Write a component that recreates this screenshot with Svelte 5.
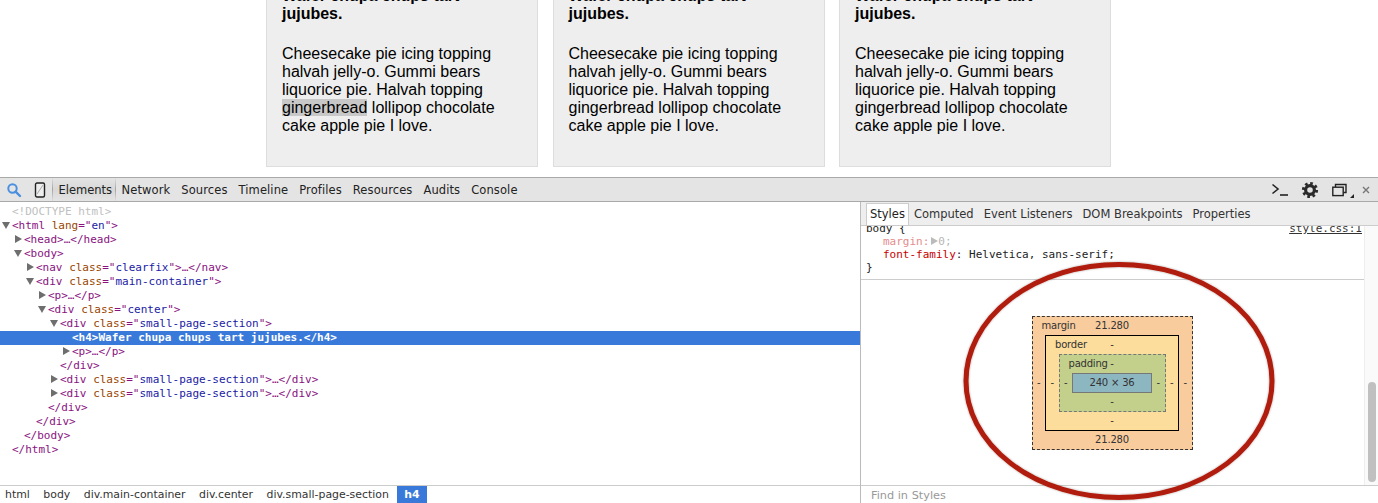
<script>
  const cards = [{ mark: true }, { mark: false }, { mark: false }]
  const tabs = ['Network', 'Sources', 'Timeline', 'Profiles', 'Resources', 'Audits', 'Console']
  const sideTabs = ['Computed', 'Event Listeners', 'DOM Breakpoints', 'Properties']
  const crumbs = ['html', 'body', 'div.main-container', 'div.center', 'div.small-page-section']

  const section = [['t', '<div '], ['a', 'class'], ['t', '="'], ['v', 'small-page-section'], ['t', '">']]
  const rows = [
    { depth: 0, parts: [['d', '<!DOCTYPE html>']] },
    { depth: 0, arrow: 'open', parts: [['t', '<html '], ['a', 'lang'], ['t', '="'], ['v', 'en'], ['t', '">']] },
    { depth: 1, arrow: 'closed', parts: [['t', '<head>…</head>']] },
    { depth: 1, arrow: 'open', parts: [['t', '<body>']] },
    { depth: 2, arrow: 'closed', parts: [['t', '<nav '], ['a', 'class'], ['t', '="'], ['v', 'clearfix'], ['t', '">…</nav>']] },
    { depth: 2, arrow: 'open', parts: [['t', '<div '], ['a', 'class'], ['t', '="'], ['v', 'main-container'], ['t', '">']] },
    { depth: 3, arrow: 'closed', parts: [['t', '<p>…</p>']] },
    { depth: 3, arrow: 'open', parts: [['t', '<div '], ['a', 'class'], ['t', '="'], ['v', 'center'], ['t', '">']] },
    { depth: 4, arrow: 'open', parts: section },
    { depth: 5, selected: true, parts: [['s', '<h4>Wafer chupa chups tart jujubes.</h4>']] },
    { depth: 5, arrow: 'closed', parts: [['t', '<p>…</p>']] },
    { depth: 4, parts: [['t', '</div>']] },
    { depth: 4, arrow: 'closed', parts: [...section, ['t', '…</div>']] },
    { depth: 4, arrow: 'closed', parts: [...section, ['t', '…</div>']] },
    { depth: 3, parts: [['t', '</div>']] },
    { depth: 2, parts: [['t', '</div>']] },
    { depth: 1, parts: [['t', '</body>']] },
    { depth: 0, parts: [['t', '</html>']] }
  ]
</script>

<div class="page">
  <div class="cards">
    {#each cards as card}
      <div class="card">
        <h4>Wafer chupa chups tart jujubes.</h4>
        <p>
          Cheesecake pie icing topping halvah jelly-o. Gummi bears liquorice pie. Halvah topping
          {#if card.mark}<span class="hl">gingerbread</span>{:else}gingerbread{/if}
          lollipop chocolate cake apple pie I love.
        </p>
      </div>
    {/each}
  </div>
</div>

<div class="devtools">
  <div class="toolbar">
    <svg class="tool search" width="16" height="16" viewBox="0 0 16 16">
      <circle cx="6.5" cy="6.5" r="4.2" fill="none" stroke="#4a8fe0" stroke-width="2" />
      <path d="M9.6 9.6 L14 14" stroke="#4a8fe0" stroke-width="2.4" stroke-linecap="round" />
    </svg>
    <svg class="tool device" width="12" height="16" viewBox="0 0 12 16">
      <rect x="1.5" y="1" width="9" height="14" rx="1.5" fill="#eee" stroke="#222" stroke-width="1.4" />
      <path d="M3 12 L9 3" stroke="#aaa" stroke-width="1" />
    </svg>
    <span class="tab active">Elements</span>
    {#each tabs as tab}
      <span class="tab">{tab}</span>
    {/each}
    <span class="spacer"></span>
    <svg class="tool" width="18" height="14" viewBox="0 0 18 14">
      <path d="M1.5 1.5 L7 6 L1.5 10.5" fill="none" stroke="#222" stroke-width="1.6" />
      <path d="M9 12 H17" stroke="#222" stroke-width="1.6" />
    </svg>
    <svg class="tool gear" width="18" height="18" viewBox="0 0 18 18">
      <circle cx="9" cy="9" r="6.6" fill="none" stroke="#2a2a2a" stroke-width="3" stroke-dasharray="2.6 2.58" />
      <circle cx="9" cy="9" r="4.4" fill="none" stroke="#2a2a2a" stroke-width="3.2" />
    </svg>
    <svg class="tool dock" width="22" height="17" viewBox="0 0 22 17">
      <path d="M3.5 6 V3.5 H14 V11.5 H11.5" fill="none" stroke="#222" stroke-width="1.4" />
      <rect x="0.8" y="6.2" width="10.4" height="8.4" fill="none" stroke="#222" stroke-width="1.4" />
      <path d="M22 13 V17 H18 Z" fill="#222" />
    </svg>
    <svg class="tool" width="8" height="8" viewBox="0 0 8 8">
      <path d="M1 1 L7 7 M7 1 L1 7" stroke="#777" stroke-width="1.4" />
    </svg>
  </div>

  <div class="split">
    <div class="left">
      <div class="tree">
        {#each rows as row}
          <div class="row" class:selected={row.selected} style="padding-left:{12 + row.depth * 12}px">
            {#if row.arrow}<span class="arrow {row.arrow}"></span>{/if}{#each row.parts as part}<span class={part[0]}>{part[1]}</span>{/each}
          </div>
        {/each}
      </div>
      <div class="crumbs">
        {#each crumbs as crumb}
          <span class="crumb">{crumb}</span>
        {/each}
        <span class="crumb current">h4</span>
      </div>
    </div>

    <div class="right">
      <div class="side-tabs">
        <span class="side-tab active">Styles</span>
        {#each sideTabs as tab}
          <span class="side-tab">{tab}</span>
        {/each}
      </div>
      <div class="side-body">
        <div class="styles">
          <div class="rule-head"><span>body &#123;</span><span class="link">style.css:1</span></div>
          <div class="decl off">margin:<i class="mini"></i><span>0;</span></div>
          <div class="decl"><b>font-family</b>: Helvetica, sans-serif;</div>
          <div>&#125;</div>
        </div>
        <div class="metrics">
          <div class="box margin">
            <div class="top"><span class="label">margin</span><span>21.280</span></div>
            <span>-</span>
            <div class="box border">
              <div class="top"><span class="label">border</span><span>-</span></div>
              <span>-</span>
              <div class="box padding">
                <div class="top"><span class="label">padding</span><span>-</span></div>
                <span>-</span>
                <div class="box content">240 × 36</div>
                <span>-</span>
                <div class="bottom">-</div>
              </div>
              <span>-</span>
              <div class="bottom">-</div>
            </div>
            <span>-</span>
            <div class="bottom">21.280</div>
          </div>
        </div>
        <div class="find">Find in Styles</div>
      </div>
      <div class="scroll"><span class="thumb"></span></div>
    </div>
  </div>

  <svg class="circle" width="320" height="246" viewBox="0 0 320 246">
    <defs>
      <filter id="soft" x="-5%" y="-5%" width="110%" height="110%">
        <feDropShadow dx="0" dy="0" stdDeviation="1" flood-color="#000" flood-opacity="0.35" />
      </filter>
    </defs>
    <ellipse cx="160" cy="123" rx="153" ry="116.5" fill="none" stroke="#b01a08" stroke-width="5" filter="url(#soft)" />
  </svg>
</div>

<style>
  :global(body) {
    margin: 0;
    background: #fff;
    overflow: hidden;
  }

  .page {
    height: 177px;
    overflow: hidden;
    font-family: 'Liberation Sans', Arial, sans-serif;
    font-size: 16px;
    line-height: 18px;
    color: #000;
  }
  .cards {
    display: flex;
    justify-content: center;
    gap: 14.5px;
    margin-top: -41px;
    padding-right: 1px;
  }
  .card {
    width: 272px;
    height: 208px;
    box-sizing: border-box;
    padding: 27px 15px 0;
    background: #eee;
    border: 1px solid #ddd;
  }
  .card h4 {
    margin: 0 0 22px;
    font-size: 16px;
  }
  .card p {
    margin: 0;
  }
  .hl {
    background: #c8c8c8;
  }

  .devtools {
    position: relative;
    height: 326px;
    box-sizing: border-box;
    border-top: 1px solid #a9a9a9;
    display: flex;
    flex-direction: column;
    font-family: 'DejaVu Sans', sans-serif;
    overflow: hidden;
  }
  .toolbar {
    height: 23px;
    flex: none;
    display: flex;
    align-items: center;
    background: #e4e4e4;
    border-bottom: 1px solid #a9a9a9;
    font-size: 11.5px;
    color: #222;
    padding-left: 6px;
  }
  .tool {
    flex: none;
  }
  .device {
    margin-left: 12px;
    margin-right: 6px;
  }
  .tab {
    height: 23px;
    line-height: 24px;
    padding: 0 5.5px;
    letter-spacing: 0.1px;
  }
  .tab.active {
    padding-right: 3px;
    letter-spacing: 0;
    background: linear-gradient(#e4e4e4, #d8d8d8 50%, #e4e4e4);
    border-left: 1px solid #aaa;
    border-right: 1px solid #aaa;
    border-image: linear-gradient(#e4e4e4, #a4a4a4 50%, #e4e4e4) 1;
  }
  .spacer {
    flex: 1;
  }
  .gear {
    margin: 0 13px 0 12px;
  }
  .dock {
    margin-right: 8px;
  }
  .toolbar svg:last-child {
    margin-right: 8px;
  }

  .split {
    flex: 1;
    display: flex;
    min-height: 0;
  }
  .left {
    width: 860px;
    flex: none;
    display: flex;
    flex-direction: column;
    border-right: 1px solid #bbb;
  }
  .tree {
    flex: 1;
    padding-top: 3px;
    font-family: 'DejaVu Sans Mono', monospace;
    font-size: 11px;
  }
  .row {
    height: 14px;
    line-height: 14px;
    white-space: pre;
    color: #881280;
  }
  .row.selected {
    background: #3879d9;
  }
  .d { color: #c0c0c0; }
  .t { color: #881280; }
  .a { color: #994500; }
  .v { color: #1a1aa6; }
  .s { color: #fff; font-weight: bold; }
  .arrow {
    display: inline-block;
    width: 0;
    height: 0;
    margin-left: -10px;
    margin-right: 2px;
    vertical-align: 0;
  }
  .arrow.open {
    border-left: 4px solid transparent;
    border-right: 4px solid transparent;
    border-top: 7px solid #6e6e6e;
  }
  .arrow.closed {
    margin-left: -9px;
    margin-right: 2px;
    border-top: 4px solid transparent;
    border-bottom: 4px solid transparent;
    border-left: 7px solid #6e6e6e;
  }
  .crumbs {
    height: 18px;
    flex: none;
    box-sizing: border-box;
    border-top: 1px solid #ccc;
    display: flex;
    font-size: 10.9px;
    color: #333;
  }
  .crumb {
    padding: 0 5px;
    margin-right: 3.5px;
    line-height: 18px;
  }
  .crumb.current {
    background: #3879d9;
    color: #fff;
    font-weight: bold;
    padding: 0 7px;
  }

  .right {
    flex: 1;
    min-width: 0;
    display: flex;
    flex-direction: column;
    position: relative;
  }
  .side-tabs {
    height: 24px;
    flex: none;
    box-sizing: border-box;
    display: flex;
    align-items: flex-end;
    padding-left: 5px;
    background: #eee;
    border-bottom: 1px solid #ccc;
    font-size: 11.5px;
    color: #333;
  }
  .side-tab {
    height: 21px;
    line-height: 21px;
    padding: 0 5px;
  }
  .side-tab.active {
    background: #fff;
    border: 1px solid #ccc;
    border-bottom: none;
    padding: 0 3px;
    color: #222;
  }
  .side-body {
    flex: 1;
    display: flex;
    flex-direction: column;
    min-height: 0;
    overflow: hidden;
  }
  .styles {
    height: 57px;
    flex: none;
    padding: 0 16px 0 5px;
    margin-top: -4px;
    border-bottom: 1px solid #ccc;
    font-family: 'DejaVu Sans Mono', monospace;
    font-size: 11px;
    line-height: 13px;
    color: #222;
  }
  .rule-head {
    display: flex;
    justify-content: space-between;
  }
  .link {
    text-decoration: underline;
    color: #333;
  }
  .decl {
    padding-left: 17px;
  }
  .decl b {
    font-weight: normal;
    color: #c80000;
  }
  .decl.off {
    color: #e58b8b;
  }
  .decl.off span {
    color: #b5b5b5;
  }
  .mini {
    display: inline-block;
    border-top: 4px solid transparent;
    border-bottom: 4px solid transparent;
    border-left: 7px solid #bbb;
    margin: 0 0 0 2px;
  }
  .metrics {
    flex: 1;
    display: flex;
    justify-content: center;
    padding-top: 36px;
    padding-right: 15px;
    font-size: 10px;
    letter-spacing: -0.2px;
    color: #333;
  }
  .box {
    display: grid;
    grid-template-columns: 12.5px auto 12.5px;
    align-items: center;
    justify-items: center;
    line-height: 18px;
  }
  .top, .bottom {
    grid-column: 1 / -1;
    width: 100%;
    height: 18px;
  }
  .top {
    display: grid;
    grid-template-columns: 1fr auto 1fr;
  }
  .bottom {
    text-align: center;
  }
  .label {
    padding-left: 9px;
    white-space: nowrap;
  }
  .margin {
    background: #f9cc9d;
    border: 1px dashed #333;
    align-self: flex-start;
  }
  .border {
    background: #fddd9b;
    border: 1px solid #000;
  }
  .padding {
    background: #c3d08b;
    border: 1px dashed #777;
  }
  .content {
    display: block;
    width: 78px;
    height: 18px;
    line-height: 18px;
    text-align: center;
    background: #8cb6c0;
    border: 1px solid #777;
  }
  .find {
    height: 17px;
    flex: none;
    padding-left: 10px;
    border-top: 1px solid #ccc;
    font-size: 11.3px;
    line-height: 19px;
    color: #999;
  }
  .scroll {
    position: absolute;
    top: 24px;
    right: 0;
    bottom: 18px;
    width: 14px;
    padding-left: 1px;
    box-sizing: border-box;
    background: #fafafa;
    border-left: 1px solid #eee;
    display: flex;
    flex-direction: column;
    justify-content: flex-end;
    align-items: center;
  }
  .thumb {
    width: 8px;
    height: 100px;
    margin-bottom: 3px;
    border-radius: 4px;
    background: #c0c0c0;
  }
  .circle {
    position: absolute;
    left: 959px;
    top: 80px;
    overflow: visible;
  }
</style>
